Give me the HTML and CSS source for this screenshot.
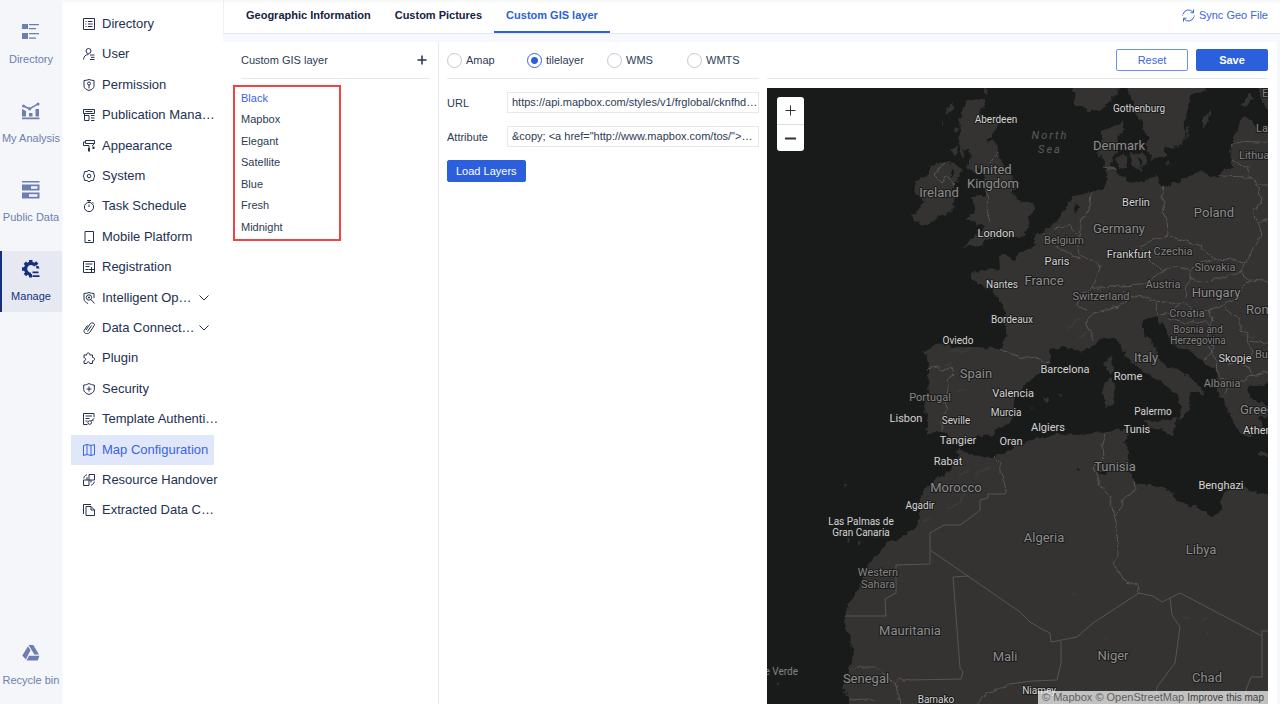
FILE: index.html
```html
<!DOCTYPE html>
<html lang="en">
<head>
<meta charset="utf-8">
<title>Map Configuration</title>
<link rel="stylesheet" href="styles.css">
</head>
<body>
<div class="app">
  <nav class="rail" aria-label="Primary">
    <a class="rail-item" href="#">
      <svg class="rail-icon" viewBox="0 0 18 18" fill="currentColor"><path d="M0 1h6v5H0zM0 10h6v6H0zM7 1h10v1.300H7zM7 5h7v1.300H7zM7 10h10v1.300H7zM7 14.500h7v1.300H7z"/></svg>
      <span>Directory</span>
    </a>
    <a class="rail-item" href="#">
      <svg class="rail-icon" viewBox="0 0 18 18" fill="currentColor"><path d="M0 15.500h17.500v1.700H0zM0 7l4 2v5.500H0zM7 11h3.500v3.500H7zM13.500 7H17v7.500h-3.500z"/><path d="M1 3.800l6.500 3 8.500-5" fill="none" stroke="currentColor" stroke-width="1.500"/><circle cx="1.500" cy="4" r="1.500"/><circle cx="7.700" cy="6.800" r="1.600"/><circle cx="16" cy="2" r="1.500"/></svg>
      <span>My Analysis</span>
    </a>
    <a class="rail-item" href="#">
      <svg class="rail-icon" viewBox="0 0 18 18" fill="currentColor"><path d="M0 0h17.500v1.500H0z"/><path fill-rule="evenodd" d="M0 3.500h17.500v6H0zM9 5.200v2.600h6.500V5.200zM0 11.500h17.500v6H0zM7 13.200v2.600h8.500v-2.600z"/></svg>
      <span>Public Data</span>
    </a>
    <a class="rail-item is-active" href="#" aria-current="page">
      <svg class="rail-icon" viewBox="0 0 18 18"><path d="M13.500 5.500A5.500 5.500 0 1 0 9 14.300" fill="none" stroke="currentColor" stroke-width="3.200"/><path d="M7 0h3.500v3H7zM0 7.300h3v3.500H0zM1.600 4l2.300-2.500 2.300 2L4 6zM12 3.200L14 1.200l2.400 2.400-2 2.200zM1.700 13.800L4 11.600l2.300 2.300-2.200 2.300zM7 14h3v3.400H7zM14 6h2.500l1 2.500h-3z" fill="currentColor"/><path d="M10.500 12.300h6M10.500 16.200h7" stroke="currentColor" stroke-width="1.800"/></svg>
      <span>Manage</span>
    </a>
    <a class="rail-item is-last" href="#">
      <svg class="rail-icon" viewBox="0 0 18 18" fill="currentColor"><path d="M6.500 1h4.800l5.700 9.500h-4.700L8.600 4.200zM6 2.200l2.500 4-4.700 9.300L.3 11.500zM7 11.800h10.500l-1.800 4.700H4.500z"/></svg>
      <span>Recycle bin</span>
    </a>
  </nav>

  <nav class="side" aria-label="Manage">
    <ul class="side-list">
      <li><a class="side-item" href="#"><svg class="ico" viewBox="0 0 12 12"><path d="M.500.500h11v11H.500zM2.500 3.500h1M2.500 6h1M2.500 8.500h1M5 3.500h4.500M5 6h4.500M5 8.500h4.500"/></svg>Directory</a></li>
      <li><a class="side-item" href="#"><svg class="ico" viewBox="0 0 12 12"><circle cx="5.500" cy="3" r="2.500"/><path d="M.600 11.500c0-3 1.800-5 4.900-5M7 7h4.500M8 9.300h3.500M7 11.500h4.500"/></svg>User</a></li>
      <li><a class="side-item" href="#"><svg class="ico" viewBox="0 0 12 12"><path d="M1 1.500C3 1.500 4.500 1 6 .500c1.500.500 3 1 5 1v5.700c0 2-2 3.300-5 4.300-3-1-5-2.300-5-4.300z"/><circle cx="6" cy="4.500" r="1.500"/><path d="M6 6v3.500"/></svg>Permission</a></li>
      <li><a class="side-item" href="#"><svg class="ico" viewBox="0 0 12 12"><path d="M.500.500h11v4H.500zM2.500 2.500h7M1.500 4.500v7H6v-5H1.500M8 6.500h3.500M8 9h3.500M8 11.500h3.500"/></svg>Publication Mana…</a></li>
      <li><a class="side-item" href="#"><svg class="ico" viewBox="0 0 12 12"><path d="M2.500.500h9v3h-9zM2.500 2H.500v3.500h5.500V8M11.500 3.500L9 6"/><path d="M6 8v3.500M10.500 6.500v2.500" stroke-width="2"/></svg>Appearance</a></li>
      <li><a class="side-item" href="#"><svg class="ico" viewBox="0 0 12 12"><path d="M6 .200l2 1.300 2.600.200.300 2.500.900 1.800-.900 1.800-.300 2.500-2.600.200-2 1.300-2-1.300-2.600-.200-.300-2.500L.200 6l.900-1.800.300-2.500L4 1.500z"/><circle cx="6" cy="6" r="1.800"/></svg>System</a></li>
      <li><a class="side-item" href="#"><svg class="ico" viewBox="0 0 12 12"><circle cx="6" cy="7" r="4.600"/><path d="M4 .500h4M6 .500v2M6 4.500V7M9.500 2.200l1.200 1.200"/></svg>Task Schedule</a></li>
      <li><a class="side-item" href="#"><svg class="ico" viewBox="0 0 12 12"><path d="M2 .500h8.500v11H2zM5 9.500h2.500"/></svg>Mobile Platform</a></li>
      <li><a class="side-item" href="#"><svg class="ico" viewBox="0 0 12 12"><path d="M.500.500h11v11H.500zM2.500 3h7M2.500 5.500h4M2.500 8.500h3M8.500 6v5M6 8.500h5"/></svg>Registration</a></li>
      <li><a class="side-item" href="#"><svg class="ico" viewBox="0 0 12 12"><path d="M11 6V1.500C9 1.500 7.500 1 6 .500 4.500 1 3 1.500 1 1.500V7c0 2 2 3.500 4 4.500"/><circle cx="6" cy="5.500" r="2.700"/><path d="M8 7.500l3.500 4M5 5.500h2M6 4.500v2"/></svg>Intelligent Op…<svg class="chev" viewBox="0 0 10 6"><path d="M.500.500L5 5 9.500.500"/></svg></a></li>
      <li><a class="side-item" href="#"><svg class="ico" viewBox="0 0 12 12"><path d="M3 8l4-6c1.200-2 5.300-1.300 4.200 1.500L7 10c-1.500 2.500-6.500 2.200-6-1.500l3.500-5.200M4.500 9.500l4-6"/></svg>Data Connect…<svg class="chev" viewBox="0 0 10 6"><path d="M.500.500L5 5 9.500.500"/></svg></a></li>
      <li><a class="side-item" href="#"><svg class="ico" viewBox="0 0 12 12"><path d="M1 3h2.700C3 .300 7.500.300 6.800 3h2.700v2.500c2.700-.500 2.700 3.800 0 3.300v2.700H6.800c.200-2.200-3-2.200-3 0H1V8.800c2.200 0 2.200-3 0-3z"/></svg>Plugin</a></li>
      <li><a class="side-item" href="#"><svg class="ico" viewBox="0 0 12 12"><path d="M.700 2C3 2 4.500 1.300 6 .500 7.500 1.300 9 2 11.300 2v4.500c0 2.300-2.300 4-5.300 5-3-1-5.300-2.700-5.300-5zM6 3.500v5M3.500 6h5"/></svg>Security</a></li>
      <li><a class="side-item" href="#"><svg class="ico" viewBox="0 0 12 12"><path d="M11 4V.500H.500v11h4M2.500 3h6.500M2.500 5.500h4M2.500 8h2"/><circle cx="6.700" cy="9.500" r="1.800"/><path d="M8 8.200L11.500 5M9.500 7l1 1.300"/></svg>Template Authenti…</a></li>
      <li><a class="side-item is-active" href="#" aria-current="page"><svg class="ico" viewBox="0 0 12 12"><path d="M.500 1.500l3.500-1 4 1 3.500-1v10l-3.500 1-4-1-3.500 1zM4 .500v10M8 1.500v10"/></svg>Map Configuration</a></li>
      <li><a class="side-item" href="#"><svg class="ico" viewBox="0 0 12 12"><path d="M6 .500h5.500V6H6zM.500 6H6v5.500H.500zM.700 4.500C1 2.500 2 1.500 4 .700M4 3v3M11.300 7.500c-.300 2-1.300 3-3.300 3.800M8 6v2.500"/></svg>Resource Handover</a></li>
      <li><a class="side-item" href="#"><svg class="ico" viewBox="0 0 12 12"><path d="M3 2.500h5L11.500 6v5.500H3zM8 2.500V6h3.500M.500 10V.500H8"/></svg>Extracted Data C…</a></li>
    </ul>
  </nav>

  <main class="main">
    <header class="topbar">
      <div class="tabs" role="tablist">
        <button class="tab" role="tab" type="button">Geographic Information</button>
        <button class="tab" role="tab" type="button">Custom Pictures</button>
        <button class="tab is-active" role="tab" type="button" aria-selected="true">Custom GIS layer</button>
      </div>
      <a class="sync" href="#"><svg class="sync-icon" viewBox="0 0 13 13"><path d="M1.200 5A5.500 5.500 0 0 1 11 3.300M11.800 8A5.500 5.500 0 0 1 2 9.700M11.500.500v3.300H8.500M1.500 12.500V9.200h3M.700 6.500v-1M12.300 6.500v1"/></svg>Sync Geo File</a>
    </header>

    <div class="workspace">
      <section class="layers">
        <div class="bar">
          <h2 class="bar-title">Custom GIS layer</h2>
          <button class="add" type="button" aria-label="Add layer"><svg viewBox="0 0 10 10"><path d="M5 .500v9M.500 5h9"/></svg></button>
        </div>
        <ul class="layer-list">
          <li><a class="layer is-active" href="#">Black</a></li>
          <li><a class="layer" href="#">Mapbox</a></li>
          <li><a class="layer" href="#">Elegant</a></li>
          <li><a class="layer" href="#">Satellite</a></li>
          <li><a class="layer" href="#">Blue</a></li>
          <li><a class="layer" href="#">Fresh</a></li>
          <li><a class="layer" href="#">Midnight</a></li>
        </ul>
      </section>

      <form class="settings">
        <div class="bar types">
          <label class="type"><input type="radio" name="type">Amap</label>
          <label class="type"><input type="radio" name="type" checked>tilelayer</label>
          <label class="type"><input type="radio" name="type">WMS</label>
          <label class="type"><input type="radio" name="type">WMTS</label>
        </div>
        <div class="fields">
          <div class="field">
            <label for="url">URL</label>
            <input id="url" type="text" value="https://api.mapbox.com/styles/v1/frglobal/cknfhd…">
          </div>
          <div class="field">
            <label for="attribute">Attribute</label>
            <input id="attribute" type="text" value="&amp;copy; &lt;a href=&quot;http://www.mapbox.com/tos/&quot;&gt;…">
          </div>
          <button class="btn btn-primary load" type="button">Load Layers</button>
        </div>
      </form>

      <section class="preview">
        <div class="bar actions">
          <button class="btn btn-outline" type="button">Reset</button>
          <button class="btn btn-primary" type="button">Save</button>
        </div>
        <div class="map">
          <svg class="map-canvas" viewBox="767 88 501 616" preserveAspectRatio="xMinYMin slice" role="img" aria-label="Map of Europe and North Africa">
            <defs>
              <filter id="coast" x="0" y="0" width="100%" height="100%">
                <feTurbulence type="fractalNoise" baseFrequency="0.15" numOctaves="3" seed="4"/>
                <feDisplacementMap in="SourceGraphic" scale="7" xChannelSelector="R" yChannelSelector="G"/>
              </filter>
              <filter id="border" x="0" y="0" width="100%" height="100%">
                <feTurbulence type="fractalNoise" baseFrequency="0.12" numOctaves="2" seed="9"/>
                <feDisplacementMap in="SourceGraphic" scale="6" xChannelSelector="R" yChannelSelector="G"/>
              </filter>
            </defs>
            <g class="land" filter="url(#coast)">
              <!-- Great Britain and Ireland -->
              <path d="M967 100L985 99 984 106 979 113 997 121 996 128 990 138 982 143 970 147 980 149 997 149 1002 163 1013 180 1015 188 1012 193 1020 202 1033 202 1035 209 1029 218 1031 222 1026 231 1022 236 1010 238 1000 237 985 240 980 246 968 246 961 249 967 243 978 233 983 232 985 226 975 222 965 219 976 212 972 197 983 196 990 190 988 182 984 176 985 166 975 172 966 168 970 158 969 150 962 151 958 140 961 130 958 120 963 110z"/>
              <path d="M930 166L944 162 957 163 961 176 954 185 955 201 952 213 940 216 924 225 914 220 912 215 924 203 915 191 917 180 930 175z"/>
              <path d="M954 102L952 111 945 115 947 108zM943 118L945 122 943 127zM955 125L960 128 954 131zM951 150L959 144 955 155zM961 149L965 153 961 161zM984 88L988 90 986 96z"/>
              <path d="M966 142L994 140 999 154 972 156z"/>
              <!-- Continental Europe -->
              <path d="M1122 120L1123 130 1118 138 1117 151 1110 165 1117 170 1120 176 1133 183 1153 178 1155 173 1163 188 1187 178 1202 171 1212 177 1220 176 1223 170 1232 168 1231 146 1240 121 1247 117 1257 128 1275 131 1275 382 1248 387 1253 400 1275 408 1275 417 1258 416 1264 430 1250 437 1240 433 1233 420 1227 410 1223 400 1217 390 1215 370 1207 365 1193 353 1173 345 1168 333 1162 322 1157 325 1157 316 1143 320 1143 333 1153 343 1160 360 1168 368 1180 369 1203 390 1204 396 1195 390 1188 393 1191 405 1183 417 1178 420 1182 407 1177 395 1160 380 1140 370 1127 358 1122 347 1113 337 1103 337 1093 345 1083 352 1070 348 1063 347 1050 350 1050 362 1040 373 1025 383 1015 400 1013 413 1010 423 1000 428 993 435 973 437 963 442 957 442 947 433 940 432 927 433 928 413 922 412 928 393 929 370 927 357 924 352 938 343 950 347 977 347 1002 349 1006 333 1005 310 999 300 992 291 982 286 972 280 970 273 988 270 1000 268 999 256 1005 255 1013 261 1020 252 1035 246 1035 236 1043 231 1053 225 1063 213 1070 201 1073 196 1088 193 1100 190 1108 180 1105 166 1098 151 1103 140 1102 131 1112 127z"/>
              <path d="M1130 153L1143 154 1148 160 1142 170 1132 166zM1117 158L1127 156 1127 168 1119 168zM1210 111L1207 123 1203 128 1203 119zM1190 125L1184 143 1186 129zM1166 162L1170 161 1170 165zM1241 104L1250 94 1254 98 1245 107zM1258 88h15v26l-8-8z"/>
              <!-- Scandinavia -->
              <path d="M1073 82L1075 103 1087 111 1100 110 1110 101 1120 90 1122 82zM1126 82L1133 105 1137 115 1148 138 1147 151 1152 160 1165 156 1165 148 1183 145 1185 121 1188 108 1190 96 1207 90 1210 82z"/>
              <!-- Mediterranean islands -->
              <path d="M1145 420L1160 421 1177 418 1172 435 1148 427zM1112 355L1113 372 1108 375 1105 362zM1110 378L1116 383 1113 405 1105 407 1103 385zM1043 399L1049 396 1051 400 1047 403zM1057 394h4l-1 2zM1030 408l3-1-1 2zM1257 453L1272 453 1272 457 1258 455z"/>
              <!-- Africa -->
              <path d="M958 448L963 450 970 455 993 457 1007 452 1020 443 1040 438 1060 434 1080 435 1102 432 1117 429 1129 431 1125 443 1130 453 1129 472 1135 482 1142 485 1163 487 1173 493 1178 502 1200 508 1213 516 1222 510 1222 493 1233 488 1243 486 1253 492 1275 496 1275 712 850 712 850 700 842 687 849 680 850 667 854 653 850 637 844 623 845 617 847 607 862 583 870 562 880 553 887 543 900 538 914 528 920 517 918 503 927 487 940 477 950 470 957 457z"/>
              <!-- Canaries, Madeira, Cape Verde -->
              <path d="M846 538l5 1-2 3zM857 541l4 1-2 3zM873 538l5-3-2 4zM842 484l5 2-3 1zM777 683l3 1-2 2z"/>
            </g>
            <g class="water" filter="url(#coast)">
              <path d="M1138 156l5 6-2 6M1080 208l-6 4 2-9zM1077 470l4-2-1 3zM1096 473l12-2-4 4zM951 170l4 3-4 4z"/>
            </g>
            <g class="relief" filter="url(#border)">
              <path d="M948 509l12-8 5-7 13-5M922 522l8-6M958 478l6-5 5-2M975 475l8-6 8-2M950 352l20-3M945 365l6-3M957 392l10-3M1068 330l12-12M1078 338l10-6M1072 594l4-1M1183 618l5 1M1200 620l6-3M1205 635l4-4M1103 640l4-2M1243 335l12 2"/>
            </g>
            <g class="borders" filter="url(#border)">
              <path d="M944 163L934 175 942 183 945 177 954 183M998 152L990 163M984 178L987 190 988 200 985 210 990 222"/>
              <path d="M1163 185L1161 198 1165 203 1163 211 1167 220 1168 235 1153 240 1140 246 1147 256 1162 271 1177 266 1190 270 1200 263 1217 260 1207 254 1200 246 1185 241 1170 236"/>
              <path d="M1190 270L1190 277 1203 283 1223 277 1240 272 1246 263 1235 259 1217 260M1218 176L1249 177 1255 180 1261 196 1260 203 1254 213 1258 222 1262 235 1250 255 1246 263M1232 161L1238 165 1249 166 1248 176M1256 185h19M1232 146L1240 141 1275 143M1258 222L1275 218M1103 167l13 2"/>
              <path d="M1091 193L1090 205 1087 213 1080 221 1080 231 1078 241 1080 255 1100 265 1095 278 1093 288 1080 295 1078 306 1086 310M1043 233L1048 240 1060 248 1073 256 1080 258M1053 229L1070 226 1078 235M1093 288L1100 288 1120 286 1140 285 1150 280 1162 271M1123 290L1128 300 1120 307 1100 310 1088 318 1086 325 1092 333 1094 341"/>
              <path d="M1128 298L1142 296 1155 301 1180 304 1186 298 1187 285 1190 277M1184 303L1195 312 1210 310 1225 304 1235 300 1243 288 1251 280 1240 272M1251 280L1275 282M1155 303L1157 315 1170 312 1180 305M1167 318L1180 322 1205 322 1210 325 1207 340 1213 347 1205 360M1209 310L1212 318 1210 325M1225 308L1240 320 1240 330 1248 333 1247 343 1254 351 1247 360M1249 341L1275 344M1209 347L1216 360 1217 372 1226 380 1227 390 1222 398M1227 365L1240 363 1250 368 1252 375 1240 382 1226 383M1250 376L1275 372"/>
              <path d="M927 368L937 366 942 370 952 368 954 375 947 380 948 390 945 402 947 410 942 418 942 430M1001 349L1010 354 1024 358 1035 357 1042 362 1050 361"/>
              <path d="M995 457L1000 462 1002 480 1007 490 1005 494M1105 433L1102 443 1103 458 1093 468 1100 485 1110 497 1114 515M1134 482L1135 490 1122 500 1121 508 1114 515 1117 527 1118 557 1113 563 1119 572 1122 580 1137 585 1139 593M850 670L858 667 875 667 885 675 895 685 900 678 909 680M895 685L899 695 900 708M1010 684L985 695 975 706M850 700l14-1 12 3"/>
            </g>
            <g class="borders">
              <path d="M1005 494L988 494 988 498 980 500 980 510 970 518 960 525 944 525 930 533 930 564 896 565 896 593 885 599 886 616 845 616M930 550L1020 612 1030 622 1040 628 1050 633 1051 642 1077 637 1093 623 1139 593 1153 596 1162 602 1180 593 1262 636 1262 631 1275 631M1262 636L1262 677 1251 677 1246 690 1245 706M969 576L953 577 960 668 963 672 961 679 909 680M1061 641L1061 663 1057 680 1032 681 1010 684M1170 598L1172 615 1180 627 1175 663 1157 687 1154 706"/>
            </g>
            <g class="sea"><text x="1050" y="139">North</text><text x="1050" y="153">Sea</text></g>
            <g class="country">
              <text x="993" y="174">United</text><text x="993" y="188">Kingdom</text><text x="939" y="197">Ireland</text>
              <text x="1119" y="150">Denmark</text><text x="1214" y="217">Poland</text><text x="1119" y="233">Germany</text>
              <text x="1044" y="285">France</text><text x="1216" y="297">Hungary</text><text x="976" y="378">Spain</text>
              <text x="1146" y="362">Italy</text><text x="1115" y="471">Tunisia</text><text x="956" y="492">Morocco</text>
              <text x="1044" y="542">Algeria</text><text x="1201" y="554">Libya</text><text x="910" y="635">Mauritania</text>
              <text x="1005" y="661">Mali</text><text x="1113" y="660">Niger</text><text x="1207" y="682">Chad</text><text x="866" y="683">Senegal</text>
              <text class="from" x="1246" y="314">Romania</text><text class="from" x="1240" y="414">Greece</text>
            </g>
            <g class="country minor">
              <text x="1064" y="244">Belgium</text><text x="1173" y="255">Czechia</text><text x="1215" y="271">Slovakia</text>
              <text x="1163" y="288">Austria</text><text x="1101" y="300">Switzerland</text><text x="1187" y="317">Croatia</text>
              <text x="1222" y="387">Albania</text>
              <text x="930" y="401">Portugal</text><text x="878" y="576">Western</text><text x="878" y="588">Sahara</text>
              <text class="from" x="1239" y="159">Lithuania</text><text class="from" x="1256" y="132">Latvia</text><text class="from" x="1262" y="97">Estonia</text>
              <text class="from" x="1255" y="358">Bulgaria</text>
            </g>
            <g class="country small">
              <text x="1198" y="333">Bosnia and</text><text x="1198" y="344">Herzegovina</text>
              <text class="to" x="798" y="675">Cape Verde</text>
            </g>
            <g class="city">
              <text x="1136" y="206">Berlin</text><text x="1129" y="258">Frankfurt</text><text x="1057" y="265">Paris</text><text x="996" y="237">London</text>
              <text x="1065" y="373">Barcelona</text><text x="1128" y="380">Rome</text><text x="1013" y="397">Valencia</text><text x="906" y="422">Lisbon</text>
              <text x="1048" y="431">Algiers</text><text x="1137" y="433">Tunis</text><text x="958" y="444">Tangier</text><text x="1011" y="445">Oran</text>
              <text x="948" y="465">Rabat</text><text x="1221" y="489">Benghazi</text><text x="1235" y="362">Skopje</text><text class="from" x="1243" y="434">Athens</text>
            </g>
            <g class="city minor">
              <text x="1139" y="112">Gothenburg</text><text x="996" y="123">Aberdeen</text><text x="1002" y="288">Nantes</text><text x="1012" y="323">Bordeaux</text>
              <text x="958" y="344">Oviedo</text><text x="956" y="424">Seville</text><text x="1006" y="416">Murcia</text><text x="1153" y="415">Palermo</text>
              <text x="920" y="509">Agadir</text><text x="861" y="525">Las Palmas de</text><text x="861" y="536">Gran Canaria</text>
              <text x="936" y="703">Bamako</text><text x="1039" y="694">Niamey</text>
            </g>
          </svg>
          <div class="zoom">
            <button type="button" aria-label="Zoom in"><svg viewBox="0 0 11 11"><path d="M5.500.500v10M.500 5.500h10"/></svg></button>
            <button type="button" aria-label="Zoom out"><svg class="minus" viewBox="0 0 11 11"><path d="M0 5.500h11"/></svg></button>
          </div>
          <div class="credit"><a href="#">© Mapbox</a> <a href="#">© OpenStreetMap</a> <a class="improve" href="#">Improve this map</a></div>
        </div>
      </section>
    </div>
  </main>
</div>
</body>
</html>
```

FILE: styles.css
```css
* { box-sizing: border-box; }

body {
  margin: 0;
  background: #fff;
  color: #2b3b55;
  font: 11px/14px "Liberation Sans", Arial, sans-serif;
}

a { color: inherit; text-decoration: none; }
ul { margin: 0; padding: 0; list-style: none; }
button, input { font: inherit; color: inherit; }
svg { display: block; }

.app {
  display: flex;
  min-height: 100vh;
  background: linear-gradient(#f4f6f6, #fff 4px);
}

/* Primary rail */
.rail {
  display: flex;
  flex-direction: column;
  gap: 18px;
  flex: none;
  width: 62px;
  padding: 14px 0 8px;
  background: #f4f6fa;
  box-shadow: 1px 0 0 #f9fafc;
}
.rail-item {
  display: flex;
  flex-direction: column;
  align-items: center;
  gap: 11px;
  height: 61px;
  padding-top: 9px;
  color: #6c7fae;
  white-space: nowrap;
}
.rail-icon { width: 18px; height: 18px; }
.rail-item.is-active {
  background: #e6e9f2;
  box-shadow: inset 2px 0 0 #15307d;
  color: #15307d;
}
.rail-item.is-last { margin-top: auto; }

/* Section navigation */
.side { flex: none; width: 161px; padding: 9px 9px; }
.side-list li:nth-child(5n + 2),
.side-list li:nth-child(5n + 4) { margin-bottom: 1px; }
.side-item {
  display: flex;
  align-items: center;
  height: 30px;
  padding: 0 5px 0 12px;
  color: #23314f;
  font-size: 13px;
  white-space: nowrap;
}
.side-item.is-active { background: #e0e7fa; color: #3a64e0; }
.ico {
  flex: none;
  width: 12px;
  height: 12px;
  margin-right: 7px;
  fill: none;
  stroke: currentColor;
  overflow: visible;
}
.chev {
  flex: none;
  width: 10px;
  height: 6px;
  margin-left: auto;
  fill: none;
  stroke: currentColor;
  overflow: visible;
}

/* Main area */
.main { display: flex; flex: 1; flex-direction: column; min-width: 0; }
.topbar {
  display: flex;
  justify-content: space-between;
  height: 34px;
  padding: 0 12px 0 10px;
  border-bottom: 1px solid #e6e8ec;
  border-left: 1px solid #eef0f4;
}
.tabs { display: flex; }
.tab {
  padding: 0 12px 2px;
  border: 0;
  border-bottom: 2px solid transparent;
  background: none;
  color: #15223f;
  font-weight: bold;
}
.tab.is-active { border-color: #2b5fdb; color: #2b5fdb; }
.sync { display: flex; align-items: center; gap: 4px; padding-bottom: 3px; color: #3a64e0; }
.sync-icon { width: 13px; height: 13px; fill: none; stroke: currentColor; }

.workspace {
  display: flex;
  flex: 1;
  border-top: 8px solid #f7f8fd;
  border-right: 3px solid #f7f8fd;
}
.bar {
  display: flex;
  align-items: center;
  height: 37px;
  border-bottom: 1px solid #e6e8ec;
}

.layers { flex: none; width: 216px; border-right: 1px solid #e6e8ec; }
.layers .bar { justify-content: space-between; margin: 0 9px 0 18px; }
.bar-title { margin: 0; font: inherit; }
.add { padding: 2px; border: 0; background: none; color: #23314f; }
.add svg { width: 10px; height: 10px; fill: none; stroke: currentColor; stroke-width: 1.5; }
.layer-list {
  width: 108px;
  margin: 6px 0 0 10px;
  padding: 1px 0;
  border: 2px solid #f24343;
}
.layer-list li:nth-child(2n) { margin-bottom: 1px; }
.layer { display: block; padding: 0 6px; line-height: 21px; }
.layer.is-active { color: #3a64e0; }

.settings { flex: none; width: 320px; padding-left: 8px; }
.types { display: grid; grid-template-columns: repeat(4, 80px); }
.type { display: flex; align-items: center; gap: 4px; }
.type input {
  flex: none;
  width: 15px;
  height: 15px;
  margin: 0;
  border: 1px solid #c3c8d2;
  border-radius: 50%;
  background: #fff;
  appearance: none;
}
.type input:checked {
  border-color: #3a64e0;
  background: radial-gradient(circle, #2b5fdb 3px, #fff 4px);
}
.fields { display: flex; flex-direction: column; gap: 13px; padding-top: 13px; }
.field { display: flex; align-items: center; }
.field label { flex: none; width: 60px; }
.field input {
  flex: 1;
  min-width: 0;
  height: 21px;
  padding: 0 0 1px 4px;
  border: 1px solid #e6e8ec;
  background: #fff;
  text-overflow: ellipsis;
}

.btn {
  height: 22px;
  min-width: 72px;
  padding: 0 8px;
  border: 1px solid #2b5fdb;
  border-radius: 2px;
}
.btn-primary { background: #2b5fdb; color: #fff; }
.btn-outline { border-color: #6f92e8; background: #fff; color: #3a64e0; }
.actions .btn-primary { font-weight: bold; }
.load { align-self: flex-start; }

.preview { display: flex; flex: 1; flex-direction: column; min-width: 0; margin: 0 9px 0 8px; }
.actions { justify-content: flex-end; gap: 8px; }

/* Map */
.map {
  position: relative;
  flex: 1;
  margin-top: 9px;
  overflow: hidden;
  background: #191a1a;
}
.map-canvas { position: absolute; inset: 0; width: 100%; height: 100%; }
.land { fill: #343332; }
.water { fill: #191a1a; }
.relief { fill: none; stroke: #3b3a39; stroke-width: 2; }
.borders { fill: none; stroke: #565554; stroke-linejoin: round; }
.map-canvas text {
  font-family: Roboto, sans-serif;
  text-anchor: middle;
  paint-order: stroke;
  stroke: #1c1c1c;
  stroke-width: 2px;
  stroke-linejoin: round;
}
.map-canvas .from { text-anchor: start; }
.map-canvas .to { text-anchor: end; }
.country { fill: #8c8c8c; font-size: 13px; }
.country.minor { fill: #828282; font-size: 11px; }
.country.small { fill: #828282; font-size: 10px; }
.city { fill: #d2d2d2; font-size: 11px; }
.city.minor { font-size: 10px; }
.sea { fill: #5a5b5b; font-size: 11px; font-style: italic; letter-spacing: 2px; }

.zoom {
  position: absolute;
  top: 9px;
  left: 10px;
  width: 27px;
  border-radius: 3px;
  background: #fff;
  overflow: hidden;
}
.zoom button {
  display: flex;
  align-items: center;
  justify-content: center;
  width: 27px;
  height: 27px;
  padding: 0;
  border: 0;
  background: none;
  color: #333;
}
.zoom button + button { border-top: 1px solid #ddd; }
.zoom svg { width: 11px; height: 11px; stroke: currentColor; }
.zoom .minus { stroke-width: 2; }

.credit {
  position: absolute;
  right: 0;
  bottom: 0;
  padding: 0 4px;
  background: rgba(255, 255, 255, 0.7);
  color: #5f5f5f;
  line-height: 13px;
  white-space: nowrap;
}
.improve { color: #404040; font-size: 10px; }
```
